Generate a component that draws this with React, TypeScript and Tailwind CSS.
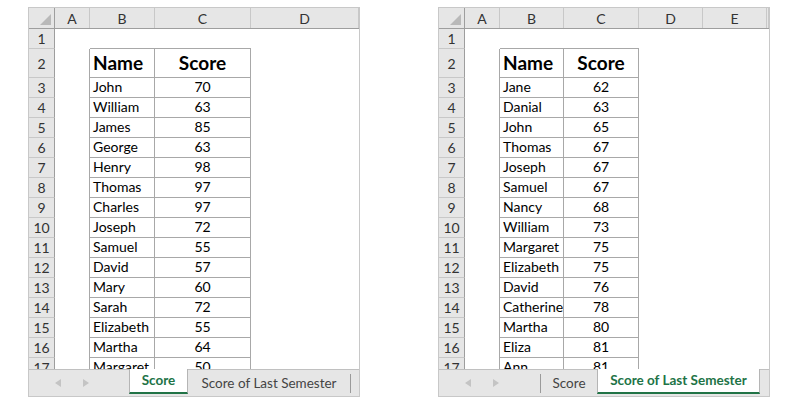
import React from "react";

type Col = { label: string; w: string };

const leftCols: Col[] = [
  { label: "A", w: "w-[35px]" },
  { label: "B", w: "w-[65px]" },
  { label: "C", w: "w-[96px]" },
  { label: "D", w: "w-[108px]" },
];

const rightCols: Col[] = [
  { label: "A", w: "w-[35px]" },
  { label: "B", w: "w-[64px]" },
  { label: "C", w: "w-[75px]" },
  { label: "D", w: "w-[64px]" },
  { label: "E", w: "w-[64px]" },
  { label: "", w: "w-[2px]" },
];

const leftData: [string, number][] = [
  ["John", 70],
  ["William", 63],
  ["James", 85],
  ["George", 63],
  ["Henry", 98],
  ["Thomas", 97],
  ["Charles", 97],
  ["Joseph", 72],
  ["Samuel", 55],
  ["David", 57],
  ["Mary", 60],
  ["Sarah", 72],
  ["Elizabeth", 55],
  ["Martha", 64],
  ["Margaret", 50],
];

const rightData: [string, number][] = [
  ["Jane", 62],
  ["Danial", 63],
  ["John", 65],
  ["Thomas", 67],
  ["Joseph", 67],
  ["Samuel", 67],
  ["Nancy", 68],
  ["William", 73],
  ["Margaret", 75],
  ["Elizabeth", 75],
  ["David", 76],
  ["Catherine", 78],
  ["Martha", 80],
  ["Eliza", 81],
  ["Ann", 81],
];

function Corner() {
  return (
    <div className="w-[26px] shrink-0 h-full border-r border-[#9e9e9e] bg-[#e6e6e6] relative">
      <svg
        className="absolute right-[3px] bottom-[3px]"
        width="11"
        height="11"
        viewBox="0 0 11 11"
      >
        <polygon points="11,0 11,11 0,11" fill="#b9b9b9" />
      </svg>
    </div>
  );
}

function ArrowLeft() {
  return (
    <svg width="6" height="8" viewBox="0 0 6 8">
      <polygon points="6,0 6,8 0,4" fill="#c4c4c4" />
    </svg>
  );
}

function ArrowRight() {
  return (
    <svg width="6" height="8" viewBox="0 0 6 8">
      <polygon points="0,0 0,8 6,4" fill="#c4c4c4" />
    </svg>
  );
}

function Sheet({
  cols,
  data,
  active,
}: {
  cols: Col[];
  data: [string, number][];
  active: 0 | 1;
}) {
  const rows = Array.from({ length: 17 }, (_, i) => i + 1);
  const tb = "border-[#a8a8a8]";
  return (
    <div className="w-[332px] h-[390px] shrink-0 border border-[#c8c8c8] bg-white flex flex-col overflow-hidden font-[family-name:Lato,'Liberation_Sans',sans-serif] text-[14px] text-black">
      {/* column headers */}
      <div className="h-[21px] shrink-0 flex border-b border-[#9e9e9e] bg-[#e6e6e6]">
        <Corner />
        {cols.map((c, i) => (
          <div
            key={i}
            className={`${c.w} shrink-0 h-full border-r border-[#c8c8c8] flex items-center justify-center text-[14px] text-[#333]`}
          >
            {c.label}
          </div>
        ))}
      </div>
      {/* body */}
      <div className="flex-1 overflow-hidden">
        {rows.map((r) => {
          const h = r === 2 ? "h-[29px]" : "h-[20px]";
          return (
            <div key={r} className={`${h} flex`}>
              <div className="w-[26px] shrink-0 h-full bg-[#e6e6e6] border-r border-r-[#9e9e9e] border-b border-b-[#c8c8c8] flex items-center justify-center text-[14px] text-[#333]">
                {r}
              </div>
              {cols.map((c, i) => {
                let cls = "";
                let content: React.ReactNode = null;
                if (i === 0 && r >= 2) cls = `border-r ${tb}`;
                if (i === 1 || i === 2) {
                  if (r === 1) cls = `border-b ${tb}`;
                  else cls = `border-r border-b ${tb}`;
                }
                if (r === 2 && i === 1)
                  content = (
                    <span className="pl-[3px] text-[19px] font-bold leading-[25px] pb-[2px]">
                      Name
                    </span>
                  );
                if (r === 2 && i === 2)
                  content = (
                    <span className="w-full text-center text-[19px] font-bold leading-[25px] pb-[2px]">
                      Score
                    </span>
                  );
                if (r >= 3 && i === 1)
                  content = <span className="pl-[3px] leading-[20px]">{data[r - 3][0]}</span>;
                if (r >= 3 && i === 2)
                  content = (
                    <span className="w-full text-center leading-[20px]">{data[r - 3][1]}</span>
                  );
                return (
                  <div
                    key={i}
                    className={`${c.w} shrink-0 h-full flex items-end whitespace-nowrap overflow-hidden ${cls}`}
                  >
                    {content}
                  </div>
                );
              })}
            </div>
          );
        })}
      </div>
      {/* tab bar */}
      <div className="h-[27px] shrink-0 border-t border-[#c0c0c0] bg-[#e6e6e6] flex text-[13.5px]">
        <div
          className={`${active === 0 ? "w-[100px]" : "w-[101px]"} shrink-0 flex items-center pl-[26px] gap-[22px]`}
        >
          <ArrowLeft />
          <ArrowRight />
        </div>
        {active === 0 ? (
          <>
            <div className="w-[59px] shrink-0 -mt-px h-[25px] bg-white border-x border-[#b5b5b5] border-b-2 border-b-[#217346] flex items-center justify-center font-bold text-[#217346]">
              Score
            </div>
            <div className="w-[162px] shrink-0 h-full flex items-center justify-center text-[#444]">
              Score of Last Semester
            </div>
            <div className="w-px h-[19px] self-center bg-[#9a9a9a]" />
          </>
        ) : (
          <>
            <div className="w-px h-[19px] self-center bg-[#9a9a9a]" />
            <div className="w-[56px] shrink-0 h-full flex items-center justify-center text-[#444]">
              Score
            </div>
            <div className="w-[163px] shrink-0 -mt-px h-[25px] bg-white border-x border-[#b5b5b5] border-b-2 border-b-[#217346] flex items-center justify-center font-bold text-[#217346]">
              Score of Last Semester
            </div>
          </>
        )}
      </div>
    </div>
  );
}

export default function App() {
  return (
    <div className="w-[800px] h-[403px] bg-white flex pl-[28px] pt-[7px] gap-[78px]">
      <Sheet cols={leftCols} data={leftData} active={0} />
      <Sheet cols={rightCols} data={rightData} active={1} />
    </div>
  );
}
